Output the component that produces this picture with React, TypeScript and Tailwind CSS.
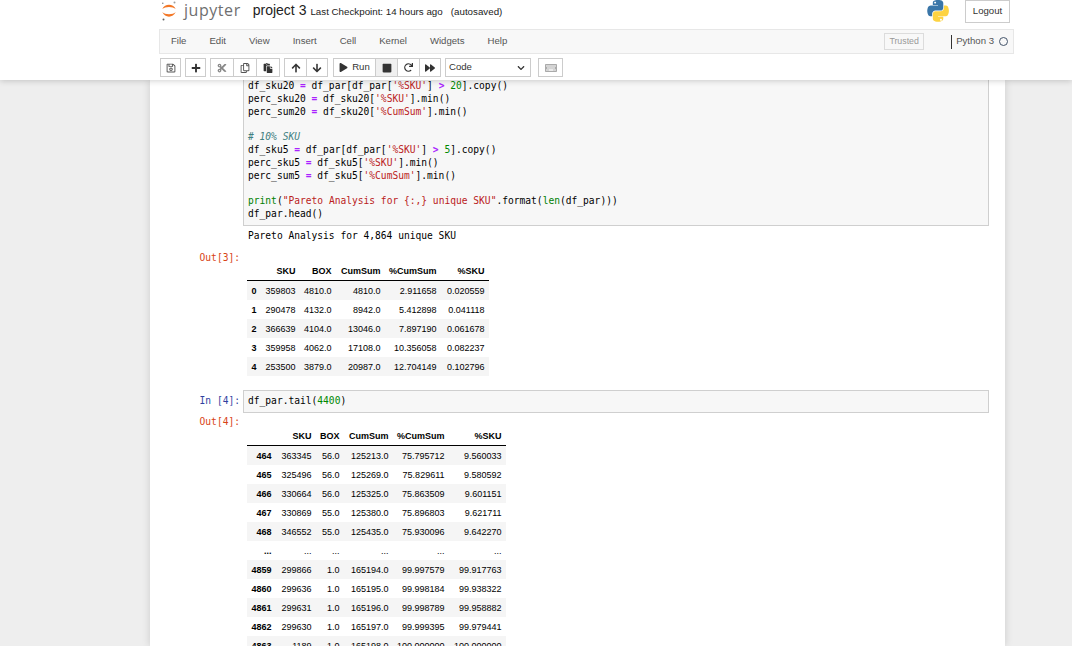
import React from "react";
import { FaRegSave, FaPlus, FaCut, FaRegCopy, FaPaste, FaArrowUp, FaArrowDown, FaPlay, FaStop, FaRedo, FaForward, FaKeyboard, FaChevronDown } from "react-icons/fa";

const V = ({ children }: { children: React.ReactNode }) => <span className="text-black">{children}</span>;
const O = ({ children }: { children: React.ReactNode }) => <span className="text-[#aa22ff] font-bold">{children}</span>;
const S = ({ children }: { children: React.ReactNode }) => <span className="text-[#ba2121]">{children}</span>;
const N = ({ children }: { children: React.ReactNode }) => <span className="text-[#008800]">{children}</span>;
const B = ({ children }: { children: React.ReactNode }) => <span className="text-[#008000]">{children}</span>;
const C = ({ children }: { children: React.ReactNode }) => <span className="text-[#408080] italic">{children}</span>;

const Line = ({ children }: { children?: React.ReactNode }) => <div className="h-[12.8px] leading-[12.8px] whitespace-pre">{children}</div>;

function Btn({ children, className = "" }: { children: React.ReactNode; className?: string }) {
  return (
    <button className={"h-[19px] border border-[#cccccc] bg-white flex items-center justify-center text-[#333] -ml-px first:ml-0 " + className}>
      {children}
    </button>
  );
}

function Logo() {
  return (
    <svg width="22" height="24" viewBox="0 0 22 24" className="shrink-0">
      <path d="M2.3 9C5 3.4 13 3.4 15.7 9C13 6.2 5 6.2 2.3 9Z" fill="#f37726" />
      <path d="M2.3 12C5 18.2 13 18.2 15.7 12C13 15 5 15 2.3 12Z" fill="#f37726" />
      <circle cx="14.5" cy="2.5" r="1" fill="#9e9e9e" />
      <circle cx="2.8" cy="3.2" r="0.7" fill="#767677" />
      <circle cx="3.5" cy="19.5" r="1" fill="#616262" />
    </svg>
  );
}

function PythonLogo() {
  return (
    <svg width="22" height="22" viewBox="0 0 110 111">
      <path fill="#3a76a8" d="M54.9 0C50.3 0 45.9.4 42.1 1.1 30.9 3.1 28.9 7.2 28.9 14.8V24.9H55.2V28.3H19C11.4 28.3 4.8 32.9 2.7 41.6.3 51.6.2 57.8 2.7 68.2 4.6 76 9 81.6 16.6 81.6H25.6V69.6C25.6 60.9 33.1 53.2 42.1 53.2H68.4C75.7 53.2 81.6 47.1 81.6 39.8V14.8C81.6 7.7 75.6 2.4 68.4 1.1 63.9.4 59.2 0 54.9 0ZM40.6 8.2C43.3 8.2 45.5 10.4 45.5 13.2 45.5 15.9 43.3 18.1 40.6 18.1 37.8 18.1 35.6 15.9 35.6 13.2 35.6 10.4 37.8 8.2 40.6 8.2Z" />
      <path fill="#fdd342" d="M85 28.3V40C85 49 77.3 56.6 68.4 56.6H42.1C34.9 56.6 28.9 62.8 28.9 70V95C28.9 102.1 35.1 106.3 42.1 108.3 50.4 110.8 58.4 111.2 68.4 108.3 75 106.4 81.6 102.5 81.6 95V85H55.3V81.6H94.8C102.4 81.6 105.3 76.3 107.9 68.2 110.7 59.9 110.6 52 107.9 41.6 106 34 102.4 28.3 94.8 28.3ZM70 95C72.7 95 74.9 97.2 74.9 99.9 74.9 102.7 72.7 104.9 70 104.9 67.3 104.9 65 102.7 65 99.9 65 97.2 67.3 95 70 95Z" />
    </svg>
  );
}

type Row = string[];

function DataTable({ widths, head, rows }: { widths: number[]; head: string[]; rows: Row[] }) {
  return (
    <table className="border-collapse table-fixed text-[9px] text-black font-['Liberation_Sans',sans-serif]" style={{ width: widths.reduce((a, b) => a + b, 0) }}>
      <colgroup>
        {widths.map((w, i) => <col key={i} style={{ width: w }} />)}
      </colgroup>
      <thead>
        <tr className="h-[19px] border-b border-black">
          {head.map((h, i) => <th key={i} className="text-right font-bold p-0 pr-[4.5px] pt-[2px] align-middle whitespace-nowrap">{h}</th>)}
        </tr>
      </thead>
      <tbody>
        {rows.map((r, i) => (
          <tr key={i} className={"h-[19px] " + (i % 2 === 0 ? "bg-[#f5f5f5]" : "bg-white")}>
            {r.map((c, j) => (
              <td key={j} className={"text-right p-0 pr-[4.5px] pt-[2px] align-middle whitespace-nowrap " + (j === 0 ? "font-bold" : "")}>{c}</td>
            ))}
          </tr>
        ))}
      </tbody>
    </table>
  );
}

const t1: Row[] = [
  ["0", "359803", "4810.0", "4810.0", "2.911658", "0.020559"],
  ["1", "290478", "4132.0", "8942.0", "5.412898", "0.041118"],
  ["2", "366639", "4104.0", "13046.0", "7.897190", "0.061678"],
  ["3", "359958", "4062.0", "17108.0", "10.356058", "0.082237"],
  ["4", "253500", "3879.0", "20987.0", "12.704149", "0.102796"],
];

const t2: Row[] = [
  ["464", "363345", "56.0", "125213.0", "75.795712", "9.560033"],
  ["465", "325496", "56.0", "125269.0", "75.829611", "9.580592"],
  ["466", "330664", "56.0", "125325.0", "75.863509", "9.601151"],
  ["467", "330869", "55.0", "125380.0", "75.896803", "9.621711"],
  ["468", "346552", "55.0", "125435.0", "75.930096", "9.642270"],
  ["...", "...", "...", "...", "...", "..."],
  ["4859", "299866", "1.0", "165194.0", "99.997579", "99.917763"],
  ["4860", "299636", "1.0", "165195.0", "99.998184", "99.938322"],
  ["4861", "299631", "1.0", "165196.0", "99.998789", "99.958882"],
  ["4862", "299630", "1.0", "165197.0", "99.999395", "99.979441"],
  ["4863", "1189", "1.0", "165198.0", "100.000000", "100.000000"],
];

const mono = "font-['DejaVu_Sans_Mono',monospace] text-[9.6px]";

function Prompt({ kind, children }: { kind: "in" | "out"; children: React.ReactNode }) {
  return (
    <div className={"w-[90px] shrink-0 text-right whitespace-pre leading-[12.8px] " + mono + " " + (kind === "in" ? "text-[#303f9f]" : "text-[#d84315]")}>
      {children}
    </div>
  );
}

export default function App() {
  return (
    <div className="w-[1072px] h-[646px] overflow-hidden flex flex-col bg-[#eeeeee] font-['Liberation_Sans',sans-serif]">
      <header className="h-[80px] shrink-0 bg-white shadow-[0_1px_6px_rgba(0,0,0,0.18)] z-10 relative flex flex-col">
        <div className="h-[29px] shrink-0 flex items-start pl-[160px] pr-[62px]">
          <Logo />
          <span className="ml-[2px] text-[16px] leading-[20px] tracking-[0.55px] text-[#6f6f70] font-['Open_Sans',sans-serif]">jupyter</span>
          <span className="ml-[12px] text-[14px] leading-[21px] text-[#222]">project 3</span>
          <span className="ml-[4px] mt-[6px] text-[9.75px] leading-[12px] text-[#222] whitespace-pre">Last Checkpoint: 14 hours ago   (autosaved)</span>
          <div className="ml-auto flex items-start gap-[16px]">
            <PythonLogo />
            <button className="w-[45px] h-[23px] border border-[#cccccc] text-[9.6px] text-[#333] bg-white">Logout</button>
          </div>
        </div>
        <div className="ml-[159px] w-[855px] h-[25px] shrink-0 bg-[#f8f8f8] border border-[#e7e7e7] flex items-center text-[9.6px] text-[#555]">
          <div className="flex pl-[11px] gap-[23px]">
            <span>File</span><span>Edit</span><span>View</span><span>Insert</span><span>Cell</span><span>Kernel</span><span>Widgets</span><span>Help</span>
          </div>
          <div className="ml-auto flex items-center pr-[5px]">
            <span className="w-[40px] h-[17px] border border-[#dcdcdc] text-[8.8px] text-[#999] flex items-center justify-center">Trusted</span>
            <span className="ml-[27px] w-px h-[14px] bg-[#333]" />
            <span className="ml-[4px] text-[#555]">Python 3</span>
            <span className="ml-[5px] w-[9px] h-[9px] rounded-full border-[1.5px] border-[#44546a]" />
          </div>
        </div>
        <div className="mt-[4px] ml-[160px] flex items-center text-[9.6px]">
          <Btn className="w-[21px] text-[#555]!"><FaRegSave size={10} /></Btn>
          <Btn className="w-[21px] ml-[4px]!"><FaPlus size={10} /></Btn>
          <div className="flex ml-[4px]">
            <Btn className="w-[24px] text-[#888]!"><FaCut size={10} /></Btn>
            <Btn className="w-[24px] text-[#555]!"><FaRegCopy size={10} /></Btn>
            <Btn className="w-[24px]"><FaPaste size={10} /></Btn>
          </div>
          <div className="flex ml-[4px]">
            <Btn className="w-[23px]"><FaArrowUp size={10} /></Btn>
            <Btn className="w-[22px]"><FaArrowDown size={10} /></Btn>
          </div>
          <div className="flex ml-[5px]">
            <Btn className="w-[43px] gap-[4px]"><FaPlay size={9} /><span>Run</span></Btn>
            <Btn className="w-[23px] bg-[#f0f0f0]!"><FaStop size={10} /></Btn>
            <Btn className="w-[23px]"><FaRedo size={9} /></Btn>
            <Btn className="w-[22px]"><FaForward size={10} /></Btn>
          </div>
          <div className="ml-[4px] w-[86px] h-[19px] border border-[#cccccc] bg-white flex items-center justify-between pl-[3px] pr-[5px] text-[#333] text-[9.6px]">
            <span>Code</span><FaChevronDown size={8} />
          </div>
          <Btn className="w-[25px] ml-[7px]! text-[#aaa]!"><FaKeyboard size={12} /></Btn>
        </div>
      </header>

      <main className="flex-1 min-h-0 overflow-hidden pl-[150px]">
        <div className="w-[855px] h-full bg-white shadow-[0_0_8px_rgba(0,0,0,0.15)]">
          <div className="flex">
            <div className="w-[93px] shrink-0" />
            <div className={"w-[746px] bg-[#f7f7f7] border-x border-b border-[#cfcfcf] pl-[4px] pb-[4px] " + mono}>
              <Line><V>df_sku20 </V><O>=</O><V> df_par[df_par[</V><S>'%SKU'</S><V>] </V><O>&gt;</O><V> </V><N>20</N><V>].copy()</V></Line>
              <Line><V>perc_sku20 </V><O>=</O><V> df_sku20[</V><S>'%SKU'</S><V>].min()</V></Line>
              <Line><V>perc_sum20 </V><O>=</O><V> df_sku20[</V><S>'%CumSum'</S><V>].min()</V></Line>
              <Line />
              <Line><C># 10% SKU</C></Line>
              <Line><V>df_sku5 </V><O>=</O><V> df_par[df_par[</V><S>'%SKU'</S><V>] </V><O>&gt;</O><V> </V><N>5</N><V>].copy()</V></Line>
              <Line><V>perc_sku5 </V><O>=</O><V> df_sku5[</V><S>'%SKU'</S><V>].min()</V></Line>
              <Line><V>perc_sum5 </V><O>=</O><V> df_sku5[</V><S>'%CumSum'</S><V>].min()</V></Line>
              <Line />
              <Line><B>print</B><V>(</V><S>"Pareto Analysis for {"{"}:,{"}"} unique SKU"</S><V>.format(</V><B>len</B><V>(df_par)))</V></Line>
              <Line><V>df_par.head()</V></Line>
            </div>
          </div>
          <div className={"ml-[98px] mt-[3px] h-[13px] leading-[13px] text-black " + mono}>Pareto Analysis for 4,864 unique SKU</div>

          <div className="flex mt-[10px]">
            <Prompt kind="out">Out[3]:</Prompt>
            <div className="ml-[7px] mt-[10px]">
              <DataTable widths={[14, 39, 36, 49, 56, 48]} head={["", "SKU", "BOX", "CumSum", "%CumSum", "%SKU"]} rows={t1} />
            </div>
          </div>

          <div className="flex mt-[14px] items-start">
            <div className="pt-[5px]"><Prompt kind="in">In [4]:</Prompt></div>
            <div className={"ml-[3px] w-[746px] h-[23px] bg-[#f7f7f7] border border-[#cfcfcf] pl-[4px] flex items-center " + mono}>
              <span className="text-black">df_par.tail(</span><N>4400</N><span className="text-black">)</span>
            </div>
          </div>

          <div className="flex mt-[3px]">
            <Prompt kind="out">Out[4]:</Prompt>
            <div className="ml-[7px] mt-[11px]">
              <DataTable widths={[29, 40, 28, 49, 56, 57]} head={["", "SKU", "BOX", "CumSum", "%CumSum", "%SKU"]} rows={t2} />
            </div>
          </div>
        </div>
      </main>
    </div>
  );
}
